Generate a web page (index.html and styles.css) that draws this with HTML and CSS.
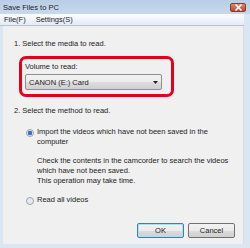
FILE: index.html
```html
<!DOCTYPE html>
<html>
<head>
<meta charset="utf-8">
<link rel="stylesheet" href="styles.css">
</head>
<body>
<div class="window">
  <div class="titlebar">
    <span class="title">Save Files to PC</span>
    <span class="close"><svg width="9" height="7" viewBox="0 0 9 7"><path d="M1.5 0.5 L7.5 6.5 M7.5 0.5 L1.5 6.5" stroke="#fff" stroke-width="1.6"/></svg></span>
  </div>
  <div class="menubar">
    <span class="menu">File(F)</span>
    <span class="menu">Settings(S)</span>
  </div>
  <div class="content">
    <div class="step">1. Select the media to read.</div>
    <div class="highlight">
      <div class="label">Volume to read:</div>
      <div class="combo">
        <span>CANON (E:) Card</span>
        <svg class="arrow" width="5" height="3" viewBox="0 0 5 3"><path d="M0 0 H5 L2.5 3 Z" fill="#222"/></svg>
      </div>
    </div>
    <div class="step step2">2. Select the method to read.</div>
    <div class="option">
      <span class="radio checked"></span>
      <div class="opttext">
        <div>Import the videos which have not been saved in the computer</div>
        <div class="desc">Check the contents in the camcorder to search the videos which have not been saved.<br>This operation may take time.</div>
      </div>
    </div>
    <div class="option opt2">
      <span class="radio"></span>
      <div class="opttext">Read all videos</div>
    </div>
    <div class="buttons">
      <button class="btn default">OK</button>
      <button class="btn">Cancel</button>
    </div>
  </div>
</div>
</body>
</html>
```

FILE: styles.css
```css
html, body {
  margin: 0;
  padding: 0;
  background: #f0f0f0;
}
body {
  width: 250px;
  height: 248px;
  overflow: hidden;
  font-family: "Liberation Sans", Arial, sans-serif;
  font-size: 7.5px;
  color: #222;
}
.window {
  width: 250px;
  height: 248px;
  display: flex;
  flex-direction: column;
  background: #dbe6f3;
  box-sizing: border-box;
}
.titlebar {
  height: 14px;
  display: flex;
  align-items: center;
  justify-content: space-between;
  padding: 0 4px 0 3px;
  background: linear-gradient(#b9cde6, #c9d9ec);
}
.title {
  font-size: 7.5px;
  color: #1e1e1e;
}
.close {
  width: 16px;
  height: 9px;
  border-radius: 2px;
  background: linear-gradient(#e0866e, #c2452d);
  border: 1px solid #8a3a2a;
  display: flex;
  align-items: center;
  justify-content: center;
  box-sizing: border-box;
}
.close svg { display: block; }
.menubar {
  height: 11px;
  display: flex;
  align-items: center;
  gap: 10px;
  padding: 0 0 0 4px;
  margin: 0 6px 0 0;
  background: linear-gradient(#fbfcfe, #e4ebf6);
  border-bottom: 1px solid #b7c3d3;
}
.content {
  flex: 1;
  margin: 0 6px 4px 3px;
  background: #f0f0f0;
  border-right: 1px solid #d8dde3;
  padding: 13px 0 0 11px;
  display: flex;
  flex-direction: column;
}
.step {
  height: 10px;
  line-height: 10px;
}
.highlight {
  margin: 7px 0 0 5px;
  width: 146px;
  height: 32px;
  border: 3px solid #e3001b;
  border-radius: 7px;
  padding: 3px 0 0 3px;
  box-sizing: content-box;
}
.label {
  height: 9px;
  line-height: 9px;
}
.combo {
  margin-top: 3px;
  width: 137px;
  height: 16px;
  box-sizing: border-box;
  border: 1px solid #8e8f8f;
  border-radius: 2px;
  background: linear-gradient(#f2f2f2 0%, #ebebeb 50%, #dddddd 51%, #cfcfcf 100%);
  display: flex;
  align-items: center;
  justify-content: space-between;
  padding: 0 3px 0 3px;
}
.arrow { display: block; }
.step2 { margin-top: 9px; }
.option {
  display: flex;
  margin: 11px 0 0 12px;
  gap: 3px;
  line-height: 10px;
}
.opttext { width: 200px; }
.desc { margin-top: 9px; }
.opt2 { margin-top: 9px; }
.radio {
  flex: none;
  width: 6px;
  height: 6px;
  margin-top: 2px;
  border-radius: 50%;
  border: 1px solid #9aa3ad;
  background: #e8eaee;
  box-sizing: content-box;
}
.radio.checked {
  background: radial-gradient(circle, #3a6fc4 0 2px, #dfe6f0 2.5px);
}
.buttons {
  margin-top: auto;
  display: flex;
  justify-content: flex-end;
  gap: 4px;
  padding: 0 8px 6px 0;
}
.btn {
  width: 47px;
  height: 15px;
  padding: 0;
  font-family: "Liberation Sans", Arial, sans-serif;
  font-size: 7.5px;
  color: #1a1a1a;
  border: 1px solid #707070;
  border-radius: 2px;
  background: linear-gradient(#f2f2f2 0%, #ebebeb 50%, #dddddd 51%, #cfcfcf 100%);
}
.btn.default {
  border-color: #3c7fb1;
  box-shadow: inset 0 0 0 1px #a8e0f8;
}
```
